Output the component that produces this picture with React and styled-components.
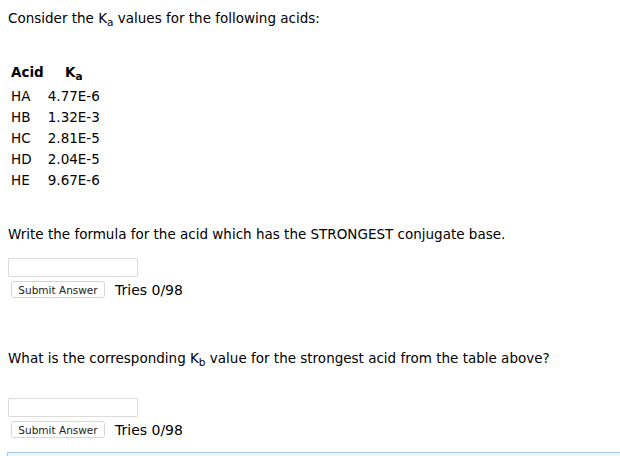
import styled, { createGlobalStyle } from 'styled-components';

const Global = createGlobalStyle`
    body {
        margin: 0;
        background: #fff;
        font-family: 'DejaVu Sans', Verdana, sans-serif;
        font-size: 13.5px;
        color: #000;
    }
`;

const acids = [
    ['HA', '4.77E-6'],
    ['HB', '1.32E-3'],
    ['HC', '2.81E-5'],
    ['HD', '2.04E-5'],
    ['HE', '9.67E-6'],
];

const Question = ({ children, gap, top }) => (
    <Part $top={top}>
        <Prompt $gap={gap}>{children}</Prompt>
        <AnswerBox type="text" />
        <SubmitRow>
            <SubmitButton>Submit Answer</SubmitButton>
            <Tries>Tries 0/98</Tries>
        </SubmitRow>
    </Part>
);

const App = () => {
    return (
        <Page>
            <Global />
            <Intro>
                Consider the K<sub>a</sub> values for the following acids:
            </Intro>
            <AcidTable>
                <thead>
                    <tr>
                        <Th>Acid</Th>
                        <Th>
                            K<sub>a</sub>
                        </Th>
                    </tr>
                </thead>
                <tbody>
                    {acids.map(([name, ka]) => (
                        <tr key={name}>
                            <Td>{name}</Td>
                            <Td>{ka}</Td>
                        </tr>
                    ))}
                </tbody>
            </AcidTable>
            <Question top={33} gap={14}>
                Write the formula for the acid which has the STRONGEST
                conjugate base.
            </Question>
            <Question top={50} gap={30}>
                What is the corresponding K<sub>b</sub> value for the strongest
                acid from the table above?
            </Question>
            <NextPanel />
        </Page>
    );
};

var Page = styled.div`
    padding: 8px 0 0 8px;
    height: 456px;
    box-sizing: border-box;
    overflow: hidden;
`;

var Intro = styled.p`
    margin: 0;
    line-height: 20px;

    sub {
        font-size: 10.5px;
        vertical-align: -3px;
        line-height: 0;
    }
`;

var AcidTable = styled.table`
    margin-top: 31px;
    border-collapse: separate;
    border-spacing: 2px;
`;

var Th = styled.th`
    text-align: center;
    font-weight: bold;
    padding: 2px 1px 3px 1px;
    height: 18px;

    sub {
        font-size: 10.5px;
        vertical-align: -3px;
        line-height: 0;
    }
`;

var Td = styled.td`
    padding: 1px;
    height: 17px;
`;

var Part = styled.div`
    margin-top: ${(p) => p.$top}px;
`;

var Prompt = styled.p`
    margin: 0 0 ${(p) => p.$gap}px 0;
    line-height: 20px;

    sub {
        font-size: 10.5px;
        vertical-align: -3px;
        line-height: 0;
    }
`;

var AnswerBox = styled.input`
    display: block;
    box-sizing: border-box;
    width: 130px;
    height: 19px;
    margin: 0;
    border: 1px solid #dcdcdc;
    border-radius: 1px;
    background: #fff;
`;

var SubmitRow = styled.div`
    display: flex;
    align-items: center;
    gap: 10px;
    margin-top: 4px;
    padding-left: 3px;
`;

var SubmitButton = styled.button`
    box-sizing: border-box;
    height: 17px;
    width: 94px;
    padding: 0;
    border: 1px solid #d6d6d6;
    border-radius: 3px;
    background: #fff;
    font-family: 'DejaVu Sans', Verdana, sans-serif;
    font-size: 10.5px;
    color: #222;
`;

var Tries = styled.span`
    font-size: 14px;
`;

var NextPanel = styled.div`
    margin-top: 14px;
    margin-left: -1px;
    height: 20px;
    border: 1px solid #a9c8ec;
    border-right: none;
    background: #eef5fd;
`;

export default App;
